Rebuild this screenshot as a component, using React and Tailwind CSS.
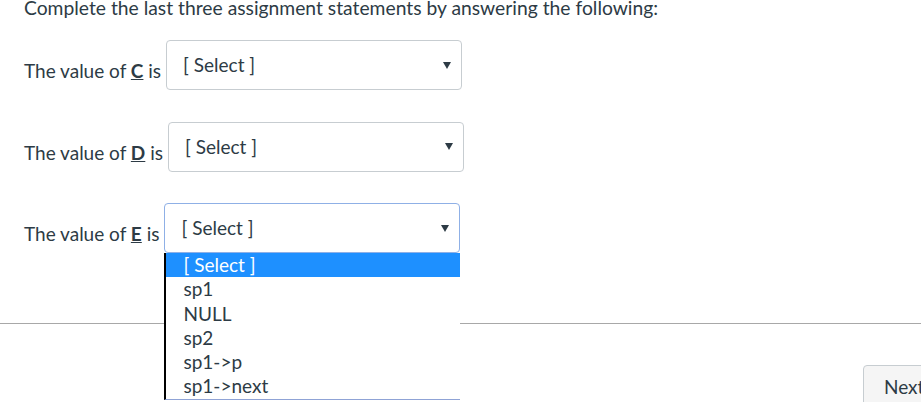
import React from 'react';

const options = ['[ Select ]', 'sp1', 'NULL', 'sp2', 'sp1->p', 'sp1->next'];

const Caret = () => (
  <svg width="8" height="7" viewBox="0 0 8 7" className="shrink-0">
    <polygon points="0,0 8,0 4,7" fill="#2d3b45" />
  </svg>
);

const SelectBox = ({ focused }) => (
  <div
    className={`w-[296px] h-[50px] rounded-[4px] border bg-white flex items-center justify-between pl-[16px] pr-[10px] ${
      focused ? 'border-[#8fb0e6]' : 'border-[#c7cdd1]'
    }`}
  >
    <span className="leading-[24px]">[ Select ]</span>
    <Caret />
  </div>
);

const Row = ({ letter, focused, children }) => (
  <div className="flex items-end gap-[5px] pl-[24px]">
    <span className="leading-[24px] mb-[7px]">
      The value of <span className="font-bold underline">{letter}</span> is
    </span>
    <div className="relative">
      <SelectBox focused={focused} />
      {children}
    </div>
  </div>
);

export default function App() {
  return (
    <div className="relative w-[921px] h-[402px] overflow-hidden bg-white font-[Lato,sans-serif] text-[19px] text-[#2d3b45]">
      <p className="pl-[24px] -mt-[3px] leading-[22px] text-[19.3px]">
        Complete the last three assignment statements by answering the following:
      </p>

      <div className="mt-[21px] flex flex-col gap-[31.5px]">
        <Row letter="C" />
        <Row letter="D" />
        <Row letter="E" focused>
          <ul className="absolute left-0 top-[50px] w-[296px] bg-white border-l-[2px] border-l-black border-b border-b-[#8fa3d6] z-10">
            {options.map((o, i) => (
              <li
                key={o}
                className={`h-[24.3px] leading-[24px] pl-[17px] ${i === 0 ? 'bg-[#1e90ff] text-white' : 'text-[#2d3b45]'}`}
              >
                {o}
              </li>
            ))}
          </ul>
        </Row>
      </div>

      <div className="mt-[70px] border-t border-[#a8a8a8]" />

      <div className="mt-[41px] pl-[863px]">
        <button className="h-[44px] w-[80px] rounded-[4px] border border-[#c7cdd1] bg-[#f5f5f5] text-left pl-[20px] leading-[24px] text-[#2d3b45]">
          Next
        </button>
      </div>
    </div>
  );
}
